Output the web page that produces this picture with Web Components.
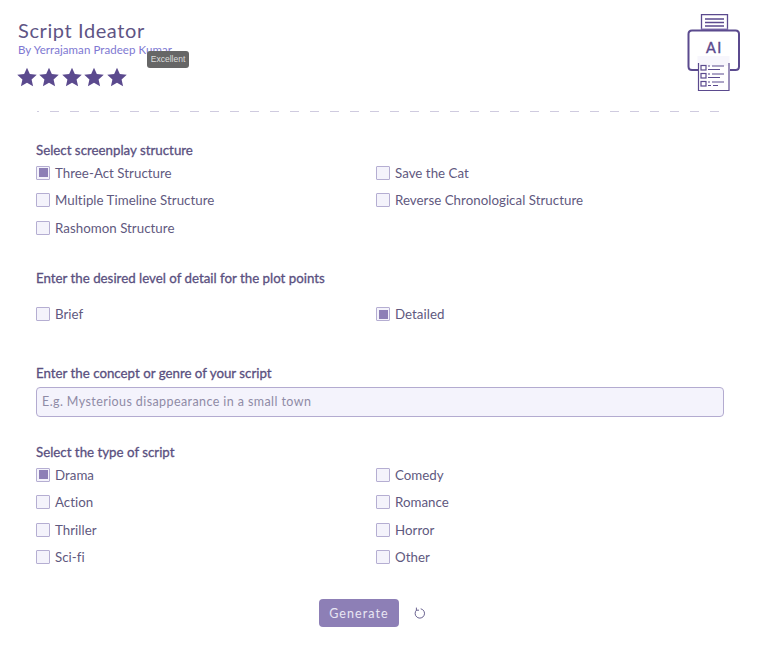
<!DOCTYPE html>
<html><head><meta charset="utf-8"><style>
html,body{margin:0;background:#fff}
body{font-family:Lato,"Open Sans",sans-serif;width:768px;height:647px;overflow:hidden}
</style></head><body>
<script>
const def=(n,css,html)=>{customElements.define(n,class extends HTMLElement{
 connectedCallback(){ if(this.shadowRoot)return; const s=this.attachShadow({mode:'open'}); s.innerHTML=`<style>${css}</style>`+html; }
});};
const star='<svg viewBox="0 0 24 24"><path d="M12 .8l3.400 7.600 8.300.9-6.200 5.600 1.800 8.200L12 18.900l-7.300 4.200 1.800-8.200L.3 9.300l8.300-.9z"/></svg>';
def('star-rating',`:host{display:flex;gap:2.400px;position:relative;margin:10px 0 0 -1px;height:24px}
svg{width:20px;height:20px;fill:#5b4a8e}
.tip{position:absolute;left:130px;top:-16px;width:42px;height:17px;border-radius:3px;background:#666;color:#ddd;font:8.500px/17px "Liberation Sans",sans-serif;text-align:center}`,
star.repeat(5)+'<div class="tip">Excellent</div>');
def('app-logo',`:host{display:block;width:54px;height:80px}svg{display:block;overflow:visible}`,
`<svg width="54" height="80" viewBox="0 0 54 80" fill="none" stroke="#5b4a8e">
<path d="M14.500 16V.6H40.500V16" stroke-width="1.300"/>
<path d="M18 5H37M18 8.500H37M18 12H37" stroke-width="1.300"/>
<rect x="14" y="14.500" width="27" height="2" fill="#8a7bb5" stroke="none"/>
<path d="M11 56H5Q1.500 56 1.500 52.500V20Q1.500 16.500 5 16.500H48.500Q52 16.500 52 20V52.500Q52 56 48.500 56H43" stroke-width="2"/>
<rect x="10.500" y="42" width="32" height="10" fill="#f7f6fc" stroke="none"/>
<path d="M11.500 49V76.500H42V49" stroke-width="1.200"/>
<g stroke-width="1.200"><rect x="14" y="51.500" width="5" height="4.500"/><rect x="14" y="59.500" width="5" height="4.500"/><rect x="14" y="67.500" width="5" height="4.500"/>
<path d="M21 52H23M25 52H37M21 55.500H33M21 60H23M25 60H37M21 63.500H33M21 68H23M25 68H37M21 71.500H24M26 71.500H31"/></g>
<text x="27.500" y="39" text-anchor="middle" font-family="Lato,sans-serif" font-size="14.500" fill="#5b4a8e" stroke="#5b4a8e" stroke-width=".4" letter-spacing="1.500">AI</text>
</svg>`);
def('app-header',`:host{display:flex;justify-content:space-between;padding:20px 27px 0 18px;height:91px}
.l{white-space:nowrap}
h1{margin:0;font:400 20px/21px Lato,sans-serif;letter-spacing:.6px;color:#5f5585}
.by{font-size:11.500px;line-height:14px;margin-top:2px;color:#7e78d2;letter-spacing:.07px}
app-logo{margin-top:-6px}`,
`<div class="l"><h1>Script Ideator</h1><div class="by">By Yerrajaman Pradeep Kumar</div><star-rating></star-rating></div><app-logo></app-logo>`);
def('dash-line',`:host{display:block;height:1px;margin:0 48px 0 37px;background:repeating-linear-gradient(90deg,#cfcbdf 0 9px,transparent 9px 20px) 13px 0/20px 1px repeat-x}`,'');
def('check-box',`:host{display:flex;align-items:center;gap:5px;height:27.500px;color:#5f5980;font-size:13.300px;letter-spacing:.03px}
i{width:12px;height:12px;border:1px solid #b5aed2;background:#f4f3fb;display:flex;align-items:center;justify-content:center;border-radius:1px;flex:none}
b{width:9px;height:9px;background:#8d7fb6;display:none}
:host([checked]) b{display:block}`,`<i><b></b></i><span><slot></slot></span>`);
def('check-grid',`:host{display:grid;grid-template-columns:340px 340px}`,`<slot></slot>`);
def('field-label',`:host{display:block;font-size:13.300px;line-height:16px;font-weight:400;-webkit-text-stroke:.3px #5a5080;color:#5a5080}`,`<slot></slot>`);
def('form-section',`:host{display:block;padding-left:36px}`,`<slot></slot>`);
def('text-field',`:host{display:block;width:688px;height:30px;margin-top:6px;box-sizing:border-box;border:1px solid #b3abd0;border-radius:4px;background:#f4f3fc;padding-left:5px;font-size:12.500px;line-height:28px;color:#8f8ba6;letter-spacing:.41px}`,`<slot></slot>`);
def('action-bar',`:host{display:flex;align-items:center;padding-left:319px;height:28px}
button{width:80px;height:28px;border:0;border-radius:4px;background:#8d7fb6;color:#e9e6f3;font:12.500px Lato,sans-serif;letter-spacing:1.100px;padding:0}
svg{margin-left:15px;display:block}`,
`<button>Generate</button><svg width="12" height="12" viewBox="0 0 12 12" fill="none" stroke="#6a6390" stroke-width="1"><path d="M2.600 3A4.700 4.700 0 1 0 6.700 1.800"/><path d="M2.400 .6V3.200H5"/></svg>`);
</script>
<app-header></app-header>
<dash-line></dash-line>
<form-section style="margin-top:30px">
 <field-label>Select screenplay structure</field-label>
 <check-grid style="margin-top:1px">
  <check-box checked>Three-Act Structure</check-box><check-box>Save the Cat</check-box>
  <check-box>Multiple Timeline Structure</check-box><check-box>Reverse Chronological Structure</check-box>
  <check-box>Rashomon Structure</check-box>
 </check-grid>
</form-section>
<form-section style="margin-top:28px">
 <field-label>Enter the desired level of detail for the plot points</field-label>
 <check-grid style="margin-top:15px"><check-box>Brief</check-box><check-box checked>Detailed</check-box></check-grid>
</form-section>
<form-section style="margin-top:37px">
 <field-label>Enter the concept or genre of your script</field-label>
 <text-field>E.g. Mysterious disappearance in a small town</text-field>
</form-section>
<form-section style="margin-top:27px">
 <field-label>Select the type of script</field-label>
 <check-grid style="margin-top:1px">
  <check-box checked>Drama</check-box><check-box>Comedy</check-box>
  <check-box>Action</check-box><check-box>Romance</check-box>
  <check-box>Thriller</check-box><check-box>Horror</check-box>
  <check-box>Sci-fi</check-box><check-box>Other</check-box>
 </check-grid>
</form-section>
<action-bar style="margin-top:28px"></action-bar>
</body></html>
